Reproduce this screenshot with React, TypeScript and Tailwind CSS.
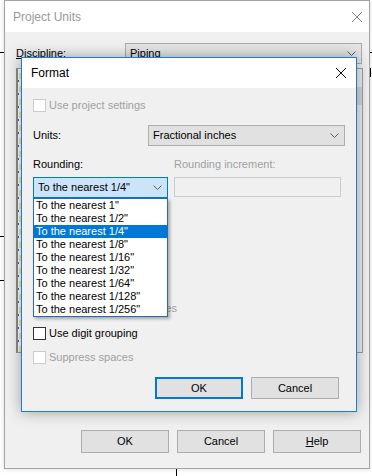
import React from "react";

const Chevron = ({ color = "#606060" }: { color?: string }) => (
  <svg width="9" height="5" viewBox="0 0 9 5" className="shrink-0">
    <path d="M0.5 0.5 L4.5 4.5 L8.5 0.5" fill="none" stroke={color} strokeWidth="1" />
  </svg>
);

const CloseX = ({ color }: { color: string }) => (
  <svg width="10" height="10" viewBox="0 0 10 10" className="shrink-0">
    <path d="M0 0 L10 10 M10 0 L0 10" stroke={color} strokeWidth="1" />
  </svg>
);

function Checkbox({ label, disabled }: { label: string; disabled?: boolean }) {
  return (
    <div className="flex items-center gap-[3px] h-[13px]">
      <span
        className={`w-[13px] h-[13px] shrink-0 border bg-white ${
          disabled ? "border-[#cccccc]" : "border-[#333333]"
        }`}
      />
      <span className={`whitespace-nowrap ${disabled ? "text-[#a0a0a0]" : "text-black"}`}>{label}</span>
    </div>
  );
}

function Button({ children, isDefault, h = "h-[22px]" }: { children: React.ReactNode; isDefault?: boolean; h?: string }) {
  return (
    <div
      className={`w-[88px] ${h} flex items-center justify-center bg-[#e1e1e1] text-black ${
        isDefault ? "border-2 border-[#0078d7]" : "border border-[#adadad]"
      }`}
    >
      {children}
    </div>
  );
}

const roundingOptions = [
  'To the nearest 1"',
  'To the nearest 1/2"',
  'To the nearest 1/4"',
  'To the nearest 1/8"',
  'To the nearest 1/16"',
  'To the nearest 1/32"',
  'To the nearest 1/64"',
  'To the nearest 1/128"',
  'To the nearest 1/256"',
];

export default function App() {
  const selected = 2;

  return (
    <div className="relative w-[372px] h-[476px] overflow-hidden bg-white font-['Liberation_Sans',Arial,sans-serif] text-[11px] text-black">
      {/* drawing lines behind the dialogs */}
      <div className="absolute left-0 top-[52px] w-[5px] h-[1px] bg-black" />
      <div className="absolute left-[368px] top-[52px] w-[4px] h-[1px] bg-black" />
      <div className="absolute left-[370px] top-[68px] w-[1px] h-[9px] bg-black" />
      <div className="absolute left-0 top-[236px] w-[5px] h-[1px] bg-black" />
      <div className="absolute left-0 top-[280px] w-[5px] h-[1px] bg-black" />
      <div className="absolute left-[176px] top-[466px] w-[1px] h-[10px] bg-black" />

      {/* Project Units (inactive) */}
      <div className="absolute left-[4px] top-0 w-[366px] h-[469px] border border-[#a3a3a3] bg-[#f0f0f0] flex flex-col shadow-[0_0_5px_rgba(0,0,0,0.15)]">
        <div className="h-[31px] shrink-0 bg-white flex items-center justify-between pl-[8px] pr-[7px] text-[12px] text-[#999999]">
          <span>Project Units</span>
          <CloseX color="#8a8a8a" />
        </div>
        <div className="flex-1 flex flex-col pl-[11px] pr-[6px] pt-[11px] pb-[15px]">
          <div className="flex items-center h-[21px] pr-[1px]">
            <span className="w-[109px]">
              <span className="underline">D</span>iscipline:
            </span>
            <div className="flex-1 h-full flex items-center justify-between pl-[4px] pr-[5px] bg-[#e5e5e5] border border-[#adadad]">
              <span>Piping</span>
              <Chevron />
            </div>
          </div>
          <div className="mt-[4px] h-[285px] flex border border-[#a0a0a0] border-l-2 border-l-[#8c8c8c] bg-white">
            <div className="w-[1px] bg-[repeating-linear-gradient(to_bottom,#ffffff_0px,#ffffff_11px,#6b6b6b_11px,#6b6b6b_13px)]" />
            <div className="w-[2px] bg-[repeating-linear-gradient(to_bottom,#ffffff_0px,#ffffff_4px,#f3e9a6_4px,#f3e9a6_10px,#ffffff_10px,#ffffff_13px)]" />
            <div className="flex-1" />
            <div className="w-[6px] flex flex-col bg-[#ededed]">
              <div className="h-[18px]" />
              <div className="h-[18px] bg-[#d6d6d6]" />
            </div>
          </div>
          <div className="flex-1" />
          <div className="flex justify-end gap-[8px] pr-[2px]">
            <Button h="h-[23px]">OK</Button>
            <Button h="h-[23px]">Cancel</Button>
            <Button h="h-[23px]">
              <span className="underline">H</span>elp
            </Button>
          </div>
        </div>
      </div>

      {/* Format (active) */}
      <div className="absolute left-[21px] top-[57px] w-[336px] h-[355px] border border-[#1a7fd4] bg-[#f0f0f0] flex flex-col shadow-[0_0_14px_rgba(0,0,0,0.35)]">
        <div className="h-[30px] shrink-0 bg-white flex items-center justify-between pl-[9px] pr-[10px] text-[12px] text-black">
          <span>Format</span>
          <CloseX color="#000000" />
        </div>
        <div className="flex flex-col px-[11px] pt-[11px]">
          <Checkbox label="Use project settings" disabled />

          <div className="mt-[13px] flex items-center justify-between h-[21px]">
            <span>Units:</span>
            <div className="w-[197px] h-full flex items-center justify-between pl-[4px] pr-[5px] bg-[#e1e1e1] border border-[#adadad]">
              <span>Fractional inches</span>
              <Chevron />
            </div>
          </div>

          <div className="mt-[11px] flex gap-[6px]">
            <div className="w-[135px] flex flex-col">
              <span className="leading-[15px]">Rounding:</span>
              <div className="relative mt-[5px]">
                <div className="h-[21px] flex items-center justify-between pl-[4px] pr-[5px] bg-[#cce4f7] border border-[#0078d7]">
                  <span className="whitespace-nowrap">{roundingOptions[selected]}</span>
                  <Chevron />
                </div>
                <div className="absolute left-0 top-full w-full z-10 bg-white border border-[#2a6ab4] shadow-[2px_2px_3px_rgba(0,0,0,0.3)]">
                  {roundingOptions.map((opt, i) => (
                    <div
                      key={opt}
                      className={`h-[13px] leading-[13px] pl-[2px] whitespace-nowrap ${
                        i === selected ? "bg-[#0078d7] text-white" : "text-black"
                      }`}
                    >
                      {opt}
                    </div>
                  ))}
                </div>
              </div>
            </div>
            <div className="w-[167px] flex flex-col">
              <span className="leading-[15px] text-[#a0a0a0] whitespace-nowrap">Rounding increment:</span>
              <div className="mt-[5px] h-[20px] border border-[#cccccc] bg-[#f0f0f0]" />
            </div>
          </div>

          {/* area under the open list */}
          <div className="h-[104px]" />

          <Checkbox label="Show + for positive values" disabled />
          <div className="mt-[12px]">
            <Checkbox label="Use digit grouping" />
          </div>
          <div className="mt-[11px]">
            <Checkbox label="Suppress spaces" disabled />
          </div>

          <div className="mt-[13px] flex justify-end gap-[8px] pr-[6px]">
            <Button isDefault>OK</Button>
            <Button>Cancel</Button>
          </div>
        </div>
      </div>
    </div>
  );
}
